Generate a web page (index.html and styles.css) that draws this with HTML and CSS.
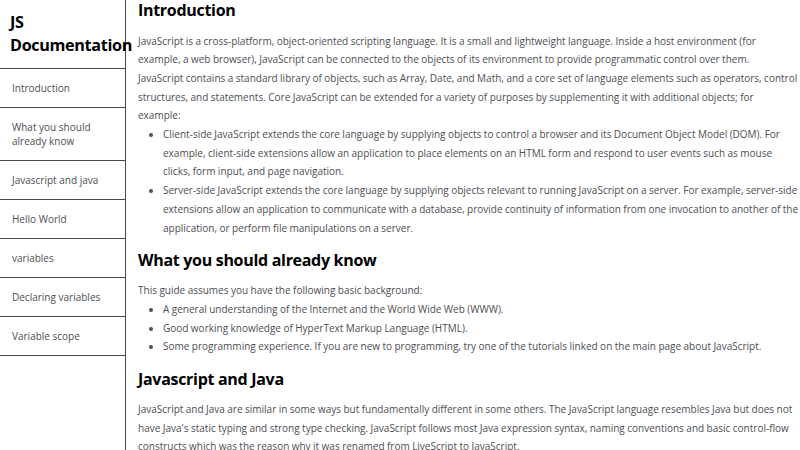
FILE: index.html
```html
<!DOCTYPE html>
<html lang="en">
<head>
<meta charset="utf-8">
<title>JS Documentation</title>
<link rel="stylesheet" href="styles.css">
</head>
<body>
<div class="page">
  <nav class="navbar" id="navbar">
    <header class="nav-title">JS Documentation</header>
    <ul class="nav-list">
      <li><a class="nav-link" href="#Introduction">Introduction</a></li>
      <li><a class="nav-link" href="#What_you_should_already_know">What you should already know</a></li>
      <li><a class="nav-link" href="#Javascript_and_java">Javascript and java</a></li>
      <li><a class="nav-link" href="#Hello_World">Hello World</a></li>
      <li><a class="nav-link" href="#variables">variables</a></li>
      <li><a class="nav-link" href="#Declaring_variables">Declaring variables</a></li>
      <li><a class="nav-link" href="#Variable_scope">Variable scope</a></li>
    </ul>
  </nav>
  <main class="main-doc" id="main-doc">
    <section class="main-section" id="Introduction">
      <header class="sec-title">Introduction</header>
      <article>
        <p>JavaScript is a cross-platform, object-oriented scripting language. It is a small and lightweight language. Inside a host environment (for example, a web browser), JavaScript can be connected to the objects of its environment to provide programmatic control over them.</p>
        <p>JavaScript contains a standard library of objects, such as Array, Date, and Math, and a core set of language elements such as operators, control structures, and statements. Core JavaScript can be extended for a variety of purposes by supplementing it with additional objects; for<br>example:</p>
        <ul>
          <li>Client-side JavaScript extends the core language by supplying objects to control a browser and its Document Object Model (DOM). For example, client-side extensions allow an application to place elements on an HTML form and respond to user events such as mouse clicks, form input, and page navigation.</li>
          <li>Server-side JavaScript extends the core language by supplying objects relevant to running JavaScript on a server. For example, server-side extensions allow an application to communicate with a database, provide continuity of information from one invocation to another of the application, or perform file manipulations on a server.</li>
        </ul>
      </article>
    </section>
    <section class="main-section" id="What_you_should_already_know">
      <header class="sec-title">What you should already know</header>
      <article>
        <p>This guide assumes you have the following basic background:</p>
        <ul>
          <li>A general understanding of the Internet and the World Wide Web (WWW).</li>
          <li>Good working knowledge of HyperText Markup Language (HTML).</li>
          <li>Some programming experience. If you are new to programming, try one of the tutorials linked on the main page about JavaScript.</li>
        </ul>
      </article>
    </section>
    <section class="main-section" id="Javascript_and_java">
      <header class="sec-title">Javascript and Java</header>
      <article>
        <p>JavaScript and Java are similar in some ways but fundamentally different in some others. The JavaScript language resembles Java but does not have Java's static typing and strong type checking. JavaScript follows most Java expression syntax, naming conventions and basic control-flow constructs which was the reason why it was renamed from LiveScript to JavaScript.</p>
      </article>
    </section>
  </main>
</div>
</body>
</html>
```

FILE: styles.css
```css
html, body {
  margin: 0;
  padding: 0;
  height: 100%;
  overflow: hidden;
}
body {
  font-family: "Open Sans", "Noto Sans", sans-serif;
  color: #4d4e53;
  background: #fff;
}
.page {
  display: flex;
  height: 100%;
}
.navbar {
  flex: 0 0 125px;
  width: 125px;
  border-right: 1px solid #4a4a4a;
  height: 100%;
}
.nav-title {
  font-size: 16.2px;
  font-weight: 700;
  color: #000;
  line-height: 23px;
  letter-spacing: -0.35px;
  padding: 11px 10px 11px;
  width: 105px;
}
.nav-list {
  list-style: none;
  margin: 0;
  padding: 0;
}
.nav-list li {
  border-top: 1px solid #4a4a4a;
}
.nav-list li:last-child {
  border-bottom: 1px solid #4a4a4a;
}
.nav-link {
  display: block;
  padding: 12px 12px;
  font-size: 10px;
  line-height: 14px;
  color: #4d4e53;
  text-decoration: none;
}
.main-doc {
  flex: 1;
  padding: 0 0 0 12px;
  min-width: 0;
}
.main-section + .main-section {
  margin-top: 12.5px;
}
.sec-title {
  font-size: 16px;
  font-weight: 700;
  color: #000;
  line-height: 20px;
  letter-spacing: -0.3px;
  margin: 0 0 11.5px;
}
.main-section p,
.main-section ul {
  margin: 0;
  font-size: 10px;
  line-height: 18.7px;
  word-spacing: -0.15px;
}
.main-section ul {
  padding-left: 25px;
}
```
